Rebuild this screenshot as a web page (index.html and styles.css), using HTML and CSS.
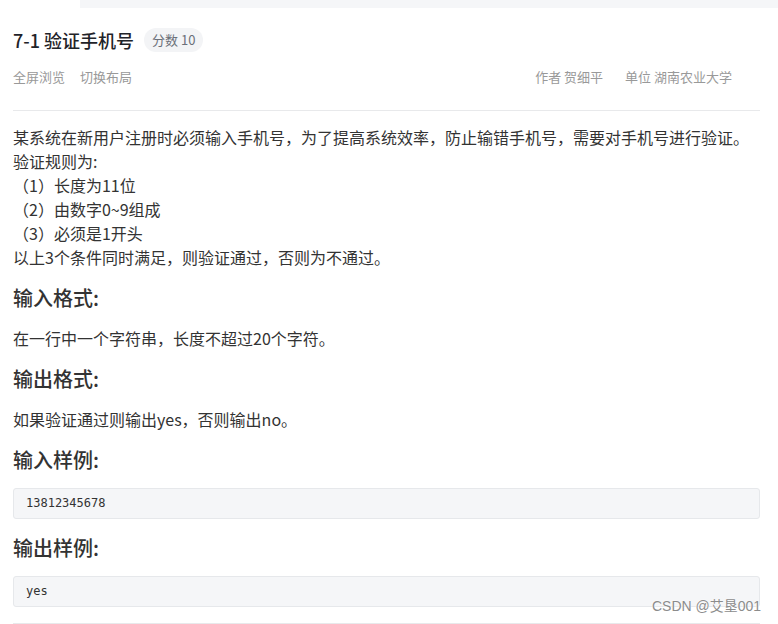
FILE: index.html
```html
<!DOCTYPE html>
<html lang="zh-CN">
<head>
<meta charset="utf-8">
<title>7-1 验证手机号</title>
<link rel="stylesheet" href="styles.css">
</head>
<body>
<div class="topbar"></div>
<main class="page">
  <header class="head">
    <div class="title-row">
      <h1 class="title">7-1 验证手机号</h1>
      <span class="badge">分数 10</span>
    </div>
    <div class="meta-row">
      <div class="actions">
        <span>全屏浏览</span>
        <span>切换布局</span>
      </div>
      <div class="info">
        <span>作者 贺细平</span>
        <span>单位 湖南农业大学</span>
      </div>
    </div>
  </header>
  <section class="content">
    <p class="para">某系统在新用户注册时必须输入手机号，为了提高系统效率，防止输错手机号，需要对手机号进行验证。<br>验证规则为:<br>（1）长度为11位<br>（2）由数字0~9组成<br>（3）必须是1开头<br>以上3个条件同时满足，则验证通过，否则为不通过。</p>
    <h2 class="sub">输入格式:</h2>
    <p class="para">在一行中一个字符串，长度不超过20个字符。</p>
    <h2 class="sub">输出格式:</h2>
    <p class="para">如果验证通过则输出yes，否则输出no。</p>
    <h2 class="sub">输入样例:</h2>
    <pre class="code">13812345678</pre>
    <h2 class="sub">输出样例:</h2>
    <pre class="code">yes</pre>
    <div class="next"></div>
  </section>
</main>
<div class="watermark">CSDN @艾垦001</div>
</body>
</html>
```
FILE: styles.css
```css
* { box-sizing: border-box; }
html, body { margin: 0; padding: 0; background: #fff; }
body {
  font-family: "Noto Sans CJK SC", "Noto Sans", sans-serif;
  color: #333;
  overflow: hidden;
  height: 624px;
}
.topbar {
  height: 8px;
  margin-left: 80px;
  background: #f5f6f8;
}
.page {
  width: 760px;
  padding-left: 13px;
}
.head {
  padding-top: 20px;
  padding-bottom: 23px;
  border-bottom: 1px solid #e8e9eb;
}
.title-row {
  display: flex;
  align-items: center;
  gap: 10px;
  height: 24px;
}
.title {
  margin: 0;
  font-size: 18px;
  line-height: 24px;
  font-weight: 500;
  color: #1f2329;
}
.badge {
  height: 24px;
  line-height: 24px;
  padding: 0 8px;
  border-radius: 12px;
  background: #f3f4f6;
  color: #6b7079;
  font-size: 13px;
}
.meta-row {
  display: flex;
  justify-content: space-between;
  margin-top: 15px;
  padding-right: 28px;
  font-size: 13px;
  line-height: 20px;
  color: #999;
}
.actions, .info { display: flex; }
.actions { gap: 15px; }
.info { gap: 22px; }
.content { padding-top: 14px; }
.para {
  margin: 0;
  font-size: 16px;
  line-height: 24px;
  color: #333;
}
.sub {
  margin: 16px 0 15px;
  font-size: 20px;
  line-height: 26px;
  font-weight: 500;
  color: #333;
}
.code {
  margin: 0 0 16px;
  padding: 6px 12px;
  font-family: "DejaVu Sans Mono", "Liberation Mono", monospace;
  font-size: 12px;
  line-height: 17px;
  color: #333;
  background: #f5f6f8;
  border: 1px solid #e6e8eb;
  border-radius: 3px;
}
.next {
  height: 20px;
  border-top: 1px solid #e8e9eb;
}
.watermark {
  position: absolute;
  left: 652px;
  top: 596px;
  font-family: "Liberation Sans", "Noto Sans CJK SC", sans-serif;
  font-size: 14px;
  line-height: 20px;
  color: #8c8c8c;
  text-shadow: 0 0 2px #fff, 0 0 1px #fff;
}
```
